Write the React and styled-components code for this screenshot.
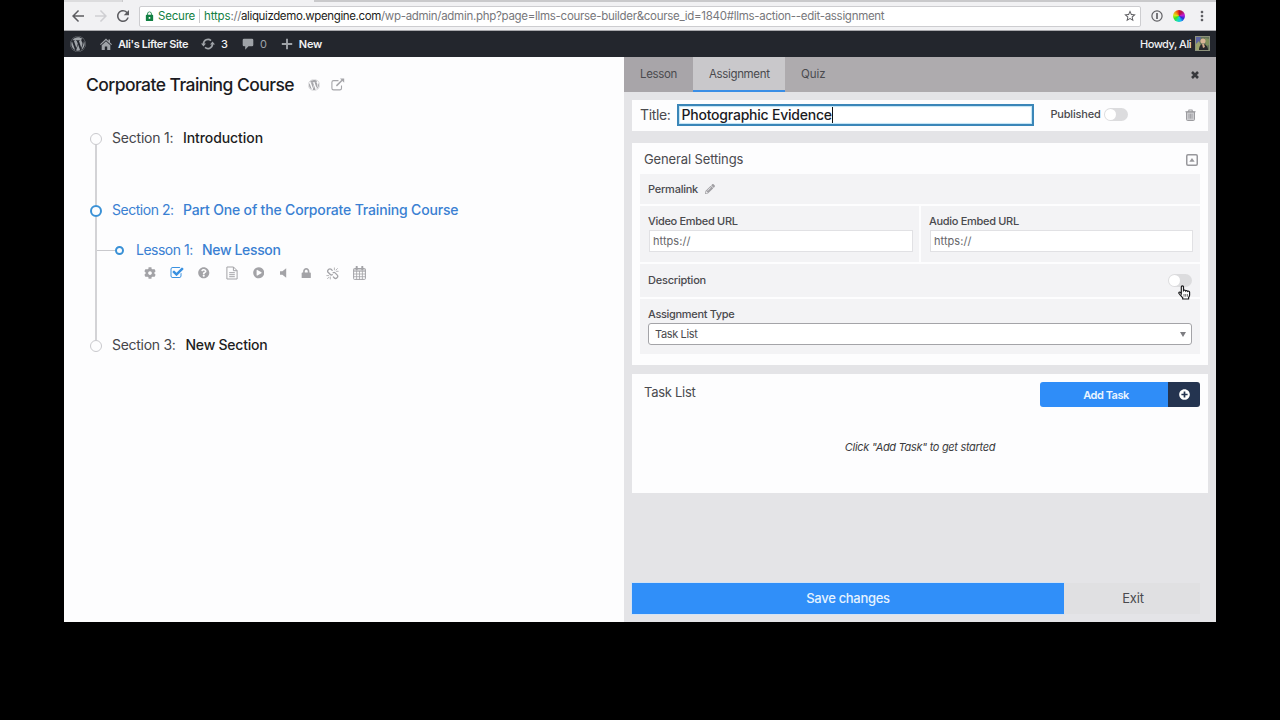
import React from 'react'
import styled, { createGlobalStyle } from 'styled-components'
import {
    FaCog,
    FaLock,
    FaPencilAlt,
    FaPlayCircle,
    FaPlusCircle,
    FaQuestionCircle,
    FaWordpress
} from 'react-icons/fa'
import { MdArrowBack, MdArrowForward, MdLock, MdMoreVert, MdRefresh, MdStarBorder } from 'react-icons/md'

const GlobalStyle = createGlobalStyle`
    body {
        margin: 0;
        background: #000;
        font-family: Inter, 'Liberation Sans', sans-serif;
        overflow: hidden;
    }

    * {
        box-sizing: border-box;
    }

    svg {
        display: block;
        flex: none;
    }
`

const CheckSquare = () => (
    <svg width='14' height='14' viewBox='0 0 1792 1792' fill='currentColor'>
        <path d='M1472 930v318q0 119-84.5 203.5t-203.5 84.5h-832q-119 0-203.5-84.5t-84.5-203.5v-832q0-119 84.5-203.5t203.5-84.5h832q63 0 117 25 15 7 18 23 3 17-9 29l-49 49q-10 10-23 10-3 0-9-2-23-6-45-6h-832q-66 0-113 47t-47 113v832q0 66 47 113t113 47h832q66 0 113-47t47-113v-254q0-13 9-22l64-64q10-10 23-10 6 0 12 3 20 8 20 29zm231-489l-814 814q-24 24-57 24t-57-24l-430-430q-24-24-24-57t24-57l110-110q24-24 57-24t57 24l263 263 647-647q24-24 57-24t57 24l110 110q24 24 24 57t-24 57z' />
    </svg>
)

const FileText = () => (
    <svg width='12' height='14' viewBox='0 0 12 14' fill='none' stroke='currentColor'>
        <path d='M.9 1h6.6l3.6 3.6v8.4H.9z' />
        <path d='M7.4 1v3.7h3.7M3.2 6.7h5.6M3.2 8.7h5.6M3.2 10.7h5.6' />
    </svg>
)

const Speaker = () => (
    <svg width='7' height='10' viewBox='0 0 7 10' fill='currentColor'>
        <path d='M0 3.3h2.400L6.200 .3v9.400L2.400 6.700H0z' />
    </svg>
)

const Unlinked = () => (
    <svg width='13' height='13' viewBox='0 0 13 13' fill='none' stroke='currentColor' strokeWidth='1.300' strokeLinecap='round'>
        <path d='M6.200 3.400 5.100 2.300a1.600 1.600 0 0 0-2.300 0l-.7.7a1.600 1.600 0 0 0 0 2.300l2.200 2.200a1.600 1.600 0 0 0 2 .2' />
        <path d='M7.400 10 8.400 11a1.600 1.600 0 0 0 2.300 0l.6-.6a1.600 1.600 0 0 0 0-2.300L9.100 5.900a1.600 1.600 0 0 0-2-.2' />
        <path d='M8.400 .9v1.900M12.200 4.300h-1.900M11.400 1.600 10 3M4.300 10v2M.8 8.600h1.900M1.500 11.700l1.500-1.500' strokeWidth='.8' />
    </svg>
)

const CalendarGrid = () => (
    <svg width='13' height='14' viewBox='0 0 13 14' fill='none' stroke='currentColor'>
        <rect x='.6' y='2.500' width='11.800' height='10.900' rx='.8' />
        <path d='M.6 5.300h11.800M.6 8h11.800M.6 10.700h11.800M3.600 5v8.400M6.500 5v8.400M9.400 5v8.400' strokeWidth='.8' />
        <path d='M.6 4h11.800' strokeWidth='2' opacity='.5' />
        <path d='M3.700 .8v2.800M9.300 .8v2.800' strokeWidth='2' strokeLinecap='round' />
    </svg>
)

const ExternalLink = () => (
    <svg width='14' height='13' viewBox='0 0 14 13' fill='none' stroke='currentColor' strokeWidth='1.1'>
        <path d='M7.500 2.600H2.600a1.700 1.700 0 0 0-1.700 1.700v5.900a1.700 1.700 0 0 0 1.700 1.700h6.200a1.700 1.700 0 0 0 1.700-1.700V7.500' />
        <path d='M5.400 7.900 11.600 1.700' strokeWidth='1.500' />
        <path d='M9 .6h4.200v4.200z' fill='currentColor' stroke='none' />
    </svg>
)

const Trash = () => (
    <svg width='11' height='12' viewBox='0 0 11 12' fill='none' stroke='currentColor'>
        <path d='M.4 2.700h10.200M3.500 2.500l.5-1.500h3l.5 1.500' strokeWidth='1.100' />
        <path d='M1.500 3v7.600c0 .5.400.9.900.9h6.200c.5 0 .9-.4.900-.9V3z' fill='currentColor' fillOpacity='.5' />
        <path d='M4 4.800v4.800M5.500 4.800v4.800M7 4.800v4.800' strokeWidth='.8' />
    </svg>
)

const CaretSquare = () => (
    <svg width='12' height='12' viewBox='0 0 12 12'>
        <rect x='.75' y='.75' width='10.500' height='10.500' rx='1.200' fill='none' stroke='currentColor' strokeWidth='1.500' />
        <path d='M6 3.900 8.700 7.800H3.300z' fill='currentColor' />
    </svg>
)

const Cross = () => (
    <svg width='8' height='8' viewBox='0 0 8 8' stroke='currentColor' strokeWidth='2.600'>
        <path d='M1 1l6 6M7 1 1 7' />
    </svg>
)

const Home = () => (
    <svg width='12' height='12' viewBox='0 0 12 12' fill='currentColor'>
        <path d='M6 .5 8.500 2.900V1.500h1.500v2.900L12 6.300l-.8.8L6 2.200.8 7.100 0 6.300z' />
        <path d='M6 3.300 10.300 7.300V12H7.200V8.500H4.800V12H1.700V7.300z' />
    </svg>
)

const Update = () => (
    <svg width='14' height='12' viewBox='0 0 14 12' fill='none' stroke='currentColor' strokeWidth='1.700'>
        <path d='M2.500 5.900A4.500 4.500 0 0 1 10 2.600' />
        <path d='M11.500 6.100A4.500 4.500 0 0 1 4 9.400' />
        <path d='M0 5.500h5L2.500 8.500zM14 6.500H9l2.500-3z' fill='currentColor' stroke='none' />
    </svg>
)

const Comment = () => (
    <svg width='12' height='12' viewBox='0 0 12 12' fill='currentColor'>
        <path d='M2 .7h8A1.300 1.300 0 0 1 11.300 2v5A1.300 1.300 0 0 1 10 8.300H6.500L3.200 11.700V8.300H2A1.300 1.300 0 0 1 .7 7V2A1.300 1.300 0 0 1 2 .7z' />
    </svg>
)

const Plus = () => (
    <svg width='12' height='12' viewBox='0 0 12 12' stroke='currentColor' strokeWidth='1.900'>
        <path d='M6 .8v10.400M.8 6h10.400' />
    </svg>
)

const InfoCircle = () => (
    <svg width='12' height='12' viewBox='0 0 12 12' fill='none' stroke='#616165'>
        <circle cx='6' cy='6' r='5.100' strokeWidth='1.200' />
        <path d='M6 3.100v5.800' strokeWidth='1.700' />
    </svg>
)

const Avatar = () => (
    <svg width='15' height='15' viewBox='0 0 15 15'>
        <rect width='15' height='15' fill='#8d927c' />
        <rect x='1' y='1' width='13' height='13' fill='#65735a' />
        <path d='M1 1h5L4 8 1 10z' fill='#5b63a0' />
        <path d='M1 8l3-3 2 5-2 4H1z' fill='#9aa26b' />
        <path d='M10 2l4 1v6l-3 1z' fill='#7f8f5c' />
        <circle cx='8' cy='5' r='2.600' fill='#d8b495' />
        <path d='M4 14c0-4 2-6 4-6s5 2 5 6z' fill='#26262a' />
        <path d='M7 8h2l1 3-2 1z' fill='#cfa88c' />
    </svg>
)

const HandPointer = () => (
    <svg width='13' height='15' viewBox='0 0 13 15'>
        <path
            d='M3.300 8.600V2a1.100 1.100 0 0 1 2.200 0v3.500c.4-.6 1.900-.5 2.100.4.500-.6 1.800-.4 2 .5.600-.5 2-.2 2 .9v2.700c0 1.100-.8 1.800-1 2.600V14H4.700v-1.300C3.700 11.600 2.100 10 1 8.500c-.6-1 .6-1.900 1.400-1.100z'
            fill='#fff'
            stroke='#1b1b1d'
            strokeWidth='1.200'
        />
        <path d='M6 9v2.700M7.700 9v2.700M9.400 9v2.700' stroke='#333' strokeWidth='.7' />
    </svg>
)

const Screen = styled.div`
    width: 1152px;
    height: 622px;
    margin: 0 auto;
    display: flex;
    flex-direction: column;
    background: #fdfdfe;
`

const Text = styled.span`
    font-size: ${(props) => props.$size || 11}px;
    font-weight: ${(props) => props.$weight || 400};
    letter-spacing: ${(props) => props.$track || 0}px;
    color: ${(props) => props.$color || '#4a4a4e'};
    white-space: nowrap;
    line-height: 16px;
`

/* browser chrome */

const TabStrip = styled.div`
    height: 2px;
    flex: none;
    display: flex;
    background: #c9c9cb;

    &::before {
        content: '';
        width: 58px;
        margin-right: 1px;
        background: #dcdcde;
    }

    &::after {
        content: '';
        width: 191px;
        background: #f1f1f3;
    }
`

const Toolbar = styled.div`
    height: 29px;
    flex: none;
    display: flex;
    align-items: center;
    padding: 0 6px 0 5px;
    background: #f1f1f3;
    border-bottom: 1px solid #a9a9ad;
    color: #5c5c60;
`

const NavButton = styled.span`
    width: 18px;
    margin-right: ${(props) => props.$gap}px;
    color: ${(props) => (props.$off ? '#cfcfd3' : '#5c5c60')};
`

const AddressBar = styled.div`
    width: 1002px;
    height: 21px;
    margin-right: 8px;
    display: flex;
    align-items: center;
    background: #fff;
    border: 1px solid #cdcdd0;
    border-radius: 2px;
    padding: 0 3px 0 4px;
`

const Secure = styled.div`
    display: flex;
    align-items: center;
    gap: 3px;
    height: 14px;
    width: 56px;
    margin-right: 4px;
    color: #118043;
    border-right: 1px solid #c9c9cc;
`

const Star = styled.span`
    margin-left: auto;
`

const ColorWheel = styled.span`
    width: 12px;
    height: 12px;
    margin: 0 9px 0 10px;
    border-radius: 50%;
    background: conic-gradient(#c3132b, #b4145d, #c31ad6, #2a2bd8, #20b9f2, #18e0b0, #3ce21b, #d8e819, #f28a12, #e01a1a);
`

/* admin bar */

const AdminBar = styled.div`
    height: 26px;
    flex: none;
    display: flex;
    align-items: center;
    padding: 0 6px 1px 6px;
    background: #23262d;
    color: #9fa3a8;
`

const AdminItem = styled.div`
    display: flex;
    align-items: center;
    gap: ${(props) => props.$gap || 6}px;
    margin-left: ${(props) => props.$left}px;
`

const Account = styled.div`
    display: flex;
    align-items: center;
    gap: 4px;
    margin-left: auto;
`

/* builder */

const Builder = styled.div`
    flex: 1;
    display: flex;
    min-height: 0;
`

const Outline = styled.main`
    width: 560px;
    padding: 16px 22px 0;
`

const CourseTitle = styled.div`
    display: flex;
    align-items: center;
    height: 24px;
    margin-bottom: 36px;
    color: #a5a5a9;

    svg:first-of-type {
        margin: 0 11px 0 14px;
    }

    svg:last-of-type {
        margin-bottom: 2px;
    }
`

const Section = styled.section`
    display: flex;
    height: ${(props) => props.$height}px;
    padding-left: 4px;
`

const Rail = styled.div`
    width: 12px;
    display: flex;
    flex-direction: column;
    align-items: center;

    &::after {
        content: '';
        display: ${(props) => (props.$last ? 'none' : 'block')};
        flex: 1;
        width: 2px;
        background: #d3d3d6;
    }
`

const Dot = styled.span`
    width: ${(props) => (props.$small ? 9 : 12)}px;
    height: ${(props) => (props.$small ? 9 : 12)}px;
    flex: none;
    border: ${(props) => (props.$active ? '2px solid #3a91d6' : '1.5px solid #c9c9cd')};
    border-radius: 50%;
    background: #fdfdfe;
`

const SectionBody = styled.div`
    flex: 1;
`

const Heading = styled.div`
    display: flex;
    height: 10px;
    align-items: center;
    padding-left: 10px;
`

const Name = styled.div`
    display: flex;
    width: ${(props) => props.$width}px;
`

const LessonRow = styled.div`
    display: flex;
    align-items: center;
    height: 18px;
    margin: 26px 0 0 -5px;

    &::before {
        content: '';
        width: 18px;
        height: 1px;
        background: #c9c9cd;
    }
`

const LessonName = styled.div`
    display: flex;
    width: 66px;
    margin-left: 12px;
`

const LessonTools = styled.div`
    display: flex;
    align-items: center;
    height: 14px;
    margin: 7px 0 0 34px;
    color: #a3a3a7;
`

const Tool = styled.span`
    display: flex;
    justify-content: center;
    width: ${(props) => props.$width}px;
    color: ${(props) => (props.$active ? '#3a91e0' : 'inherit')};
`

/* settings panel */

const Panel = styled.aside`
    width: 592px;
    display: flex;
    flex-direction: column;
    background: #e4e4e7;
`

const Tabs = styled.nav`
    height: 35px;
    display: flex;
    background: #aeabae;
`

const Tab = styled.div`
    display: flex;
    align-items: center;
    padding: 0 16px ${(props) => (props.$active ? 0 : 2)}px;
    border-bottom: ${(props) => (props.$active ? '2px solid #3a8ee6' : '0')};
    width: ${(props) => props.$width}px;
    background: ${(props) => (props.$active ? '#c9c8cb' : props.$dim ? '#a8a5a9' : 'none')};
`

const Close = styled.span`
    margin: 0 17px 0 auto;
    align-self: center;
    color: #38383c;
`

const PanelBody = styled.div`
    flex: 1;
    display: flex;
    flex-direction: column;
    padding: 8px;
`

const Card = styled.div`
    background: #fdfdfe;
    height: ${(props) => props.$height}px;
    margin-bottom: ${(props) => props.$gap}px;
    padding: 0 8px;
`

const TitleCard = styled(Card)`
    display: flex;
    align-items: center;
    padding-bottom: 1px;
    color: #9b9b9f;
`

const TitleInput = styled.div`
    width: 357px;
    height: 22px;
    display: flex;
    align-items: center;
    margin: 0 17px 0 6px;
    padding-left: 3px;
    border: 2px solid #3a86b8;
    box-shadow: inset 0 0 1px 1px #bfe3f5;
    background: #fff;
`

const Caret = styled.span`
    width: 1px;
    height: 16px;
    background: #111;
`

const Publish = styled.div`
    display: flex;
    align-items: center;
    gap: 3px;
    padding-bottom: 2px;
`

const Switch = styled.span`
    display: flex;
    align-items: center;
    width: 24px;
    height: 13px;
    flex: none;
    padding: 1px;
    border-radius: 7px;
    background: #dcdcde;

    &::before {
        content: '';
        width: 11px;
        height: 11px;
        border-radius: 50%;
        background: #fff;
    }
`

const CardHeader = styled.div`
    display: flex;
    justify-content: space-between;
    align-items: center;
    height: 31px;
    padding: 1px 2px 0 4px;
    color: #98989c;

    svg {
        margin-top: 1px;
    }
`

const Fields = styled.div`
    display: flex;
    flex-direction: column;
    gap: 2px;
`

const FieldRow = styled.div`
    display: flex;
    align-items: center;
    justify-content: ${(props) => (props.$spread ? 'space-between' : 'flex-start')};
    gap: 7px;
    height: ${(props) => props.$height}px;
    padding: 0 8px ${(props) => (props.$spread ? 1 : 0)}px;
    background: #f3f3f5;
    color: #a09fa3;
`

const FieldPair = styled.div`
    display: grid;
    grid-template-columns: 279px 279px;
    gap: 2px;

    > :first-child {
        padding-right: 6px;
    }
`

const Field = styled.div`
    display: flex;
    flex-direction: column;
    height: ${(props) => props.$height || 56}px;
    padding: 7px 7px 0 8px;
    background: #f3f3f5;
`

const UrlInput = styled.div`
    display: flex;
    align-items: center;
    height: 22px;
    margin: 1px 0 0 1px;
    padding-left: 3px;
    background: #fff;
    border: 1px solid #e1e1e4;
`

const Select = styled.div`
    display: flex;
    align-items: center;
    justify-content: space-between;
    height: 22px;
    margin: 1px 1px 0 0;
    padding: 0 5px 0 6px;
    background: #fff;
    border: 1px solid #a4a4a8;
    border-radius: 3px;
`

const Arrow = styled.span`
    border: 3px solid transparent;
    border-top: 5px solid #7d7d81;
    border-bottom: 0;
`

const TaskHeader = styled.div`
    display: flex;
    justify-content: space-between;
    padding: 8px 0 0 4px;
`

const TaskTitle = styled.div`
    display: flex;
    padding-top: 2px;
    height: 18px;
`

const SplitButton = styled.div`
    display: grid;
    grid-template-columns: 128px 32px;
    height: 25px;
    border-radius: 3px;
    overflow: hidden;
    color: #fff;
`

const ButtonPart = styled.span`
    display: flex;
    align-items: center;
    justify-content: center;
    padding-left: ${(props) => (props.$dark ? 0 : 4)}px;
    background: ${(props) => (props.$dark ? '#243450' : '#2f8df8')};
`

const Empty = styled.div`
    display: flex;
    justify-content: center;
    padding-top: 32px;
    font-style: italic;
`

const Footer = styled.div`
    display: flex;
    height: 31px;
    margin-top: auto;
    padding-right: 8px;
`

const FooterButton = styled.div`
    display: flex;
    align-items: center;
    justify-content: center;
    padding: 0 0 1px ${(props) => (props.$primary ? 0 : 2)}px;
    width: ${(props) => (props.$primary ? 432 : 136)}px;
    background: ${(props) => (props.$primary ? '#308ff9' : '#e0e0e2')};
    box-shadow: ${(props) => (props.$primary ? '0 0 0 1px #d3e3f5' : 'none')};
`

const Cursor = styled.div`
    position: absolute;
    left: 1178px;
    top: 285px;
`

const lessonTools = [
    { icon: <FaCog size={12} />, width: 27 },
    { icon: <CheckSquare />, width: 27, active: true },
    { icon: <FaQuestionCircle size={11.5} />, width: 28 },
    { icon: <FileText />, width: 27 },
    { icon: <FaPlayCircle size={11.5} />, width: 27 },
    { icon: <Speaker />, width: 23 },
    { icon: <FaLock size={10.5} />, width: 22 },
    { icon: <Unlinked />, width: 30 },
    { icon: <CalendarGrid />, width: 25 }
]

const blue = '#3a80d2'

const Browser = () => (
    <>
        <TabStrip />
        <Toolbar>
            <NavButton $gap={5}><MdArrowBack size={18} /></NavButton>
            <NavButton $gap={4} $off><MdArrowForward size={18} /></NavButton>
            <NavButton $gap={7}><MdRefresh size={18} /></NavButton>
            <AddressBar>
                <Secure>
                    <MdLock size={11} />
                    <Text $size={11.5} $track={-0.2} $color='#118043'>Secure</Text>
                </Secure>
                <Text $size={11.5} $color='#118043' $track={-0.15}>https</Text>
                <Text $size={11.5} $color='#77777b' $track={-0.33}>://</Text>
                <Text $size={11.5} $color='#1d1d20' $track={-0.38}>aliquizdemo.wpengine.com</Text>
                <Text $size={11.5} $color='#77777b' $track={-0.29}>
                    /wp-admin/admin.php?page=llms-course-builder&course_id=1840#llms-action--edit-assignment
                </Text>
                <Star><MdStarBorder size={14} /></Star>
            </AddressBar>
            <AdminItem $left={2}><InfoCircle /></AdminItem>
            <ColorWheel />
            <MdMoreVert size={16} />
        </Toolbar>
    </>
)

const WpBar = () => (
    <AdminBar>
        <FaWordpress size={16} />
        <AdminItem $left={14}>
            <Home />
            <Text $weight={600} $track={-0.4} $color='#f1f1f3'>Ali's Lifter Site</Text>
        </AdminItem>
        <AdminItem $left={13}>
            <Update />
            <Text $weight={500} $color='#f1f1f3'>3</Text>
        </AdminItem>
        <AdminItem $left={14}>
            <Comment />
            <Text $color='#9fa3a8'>0</Text>
        </AdminItem>
        <AdminItem $left={14}>
            <Plus />
            <Text $weight={600} $track={-0.3} $color='#f1f1f3'>New</Text>
        </AdminItem>
        <Account>
            <Text $weight={500} $track={-0.48} $color='#f1f1f3'>Howdy, Ali</Text>
            <Avatar />
        </Account>
    </AdminBar>
)

const CourseSection = (props) => (
    <Section $height={props.height}>
        <Rail $last={props.last}>
            <Dot $active={props.active} />
        </Rail>
        <SectionBody>
            <Heading>
                <Name $width={props.nameWidth}>
                    <Text $size={14} $track={props.labelTrack} $color={props.active ? blue : '#45454a'}>
                        {props.label}
                    </Text>
                </Name>
                <Text $size={14} $weight={500} $track={props.nameTrack} $color={props.active ? blue : '#1d1d22'}>
                    {props.name}
                </Text>
            </Heading>
            {props.children}
        </SectionBody>
    </Section>
)

const CourseOutline = () => (
    <Outline>
        <CourseTitle>
            <Text $size={17.5} $weight={500} $track={-0.56} $color='#1b1b22'>Corporate Training Course</Text>
            <FaWordpress size={12} />
            <ExternalLink />
        </CourseTitle>
        <CourseSection height={72} label='Section 1:' labelTrack={-0.2} nameWidth={71} name='Introduction' nameTrack={-0.08} />
        <CourseSection
            height={135}
            active
            label='Section 2:'
            labelTrack={-0.47}
            nameWidth={71}
            name='Part One of the Corporate Training Course'
            nameTrack={-0.17}
        >
            <LessonRow>
                <Dot $active $small />
                <LessonName>
                    <Text $size={14} $track={-0.5} $color={blue}>Lesson 1:</Text>
                </LessonName>
                <Text $size={14} $weight={500} $track={-0.35} $color={blue}>New Lesson</Text>
            </LessonRow>
            <LessonTools>
                {lessonTools.map((tool, i) => (
                    <Tool key={i} $width={tool.width} $active={tool.active}>{tool.icon}</Tool>
                ))}
            </LessonTools>
        </CourseSection>
        <CourseSection height={20} last label='Section 3:' labelTrack={-0.29} nameWidth={73.5} name='New Section' nameTrack={-0.22} />
    </Outline>
)

const GeneralSettings = () => (
    <Card $height={222} $gap={9}>
        <CardHeader>
            <Text $size={13} $track={-0.13}>General Settings</Text>
            <CaretSquare />
        </CardHeader>
        <Fields>
            <FieldRow $height={30}>
                <Text $weight={500} $track={-0.24}>Permalink</Text>
                <FaPencilAlt size={10} />
            </FieldRow>
            <FieldPair>
                <Field>
                    <Text $weight={500} $track={-0.31}>Video Embed URL</Text>
                    <UrlInput><Text $track={0.05} $color='#66666a'>https://</Text></UrlInput>
                </Field>
                <Field>
                    <Text $weight={500} $track={-0.31}>Audio Embed URL</Text>
                    <UrlInput><Text $track={0.05} $color='#66666a'>https://</Text></UrlInput>
                </Field>
            </FieldPair>
            <FieldRow $height={33} $spread>
                <Text $weight={500} $track={-0.22}>Description</Text>
                <Switch />
            </FieldRow>
            <Field $height={55}>
                <Text $weight={500} $track={-0.33}>Assignment Type</Text>
                <Select>
                    <Text $track={-0.36}>Task List</Text>
                    <Arrow />
                </Select>
            </Field>
        </Fields>
    </Card>
)

const TaskList = () => (
    <Card $height={119} $gap={0}>
        <TaskHeader>
            <TaskTitle>
                <Text $size={13} $track={-0.28}>Task List</Text>
            </TaskTitle>
            <SplitButton>
                <ButtonPart>
                    <Text $weight={600} $track={-0.49} $color='#eaf5ff'>Add Task</Text>
                </ButtonPart>
                <ButtonPart $dark><FaPlusCircle size={11} /></ButtonPart>
            </SplitButton>
        </TaskHeader>
        <Empty>
            <Text $track={-0.32} $color='#3c3c40'>Click "Add Task" to get started</Text>
        </Empty>
    </Card>
)

const SettingsPanel = () => (
    <Panel>
        <Tabs>
            <Tab $width={69} $dim><Text $size={11.5} $track={-0.34}>Lesson</Text></Tab>
            <Tab $width={92} $active><Text $size={11.5} $track={-0.35}>Assignment</Text></Tab>
            <Tab><Text $size={11.5} $track={-0.06}>Quiz</Text></Tab>
            <Close><Cross /></Close>
        </Tabs>
        <PanelBody>
            <TitleCard $height={31} $gap={12}>
                <Text $size={14} $track={-0.35}>Title:</Text>
                <TitleInput>
                    <Text $size={14} $weight={500} $track={-0.22} $color='#1b1b1f'>Photographic Evidence</Text>
                    <Caret />
                </TitleInput>
                <Publish>
                    <Text $weight={500} $track={-0.2}>Published</Text>
                    <Switch />
                </Publish>
                <AdminItem $left={57}><Trash /></AdminItem>
            </TitleCard>
            <GeneralSettings />
            <TaskList />
            <Footer>
                <FooterButton $primary>
                    <Text $size={13} $weight={500} $track={-0.3} $color='#e6f3ff'>Save changes</Text>
                </FooterButton>
                <FooterButton>
                    <Text $size={13} $track={-0.2}>Exit</Text>
                </FooterButton>
            </Footer>
        </PanelBody>
    </Panel>
)

const App = () => {
    return (
        <>
            <GlobalStyle />
            <Screen>
                <Browser />
                <WpBar />
                <Builder>
                    <CourseOutline />
                    <SettingsPanel />
                </Builder>
            </Screen>
            <Cursor><HandPointer /></Cursor>
        </>
    )
}

export default App
